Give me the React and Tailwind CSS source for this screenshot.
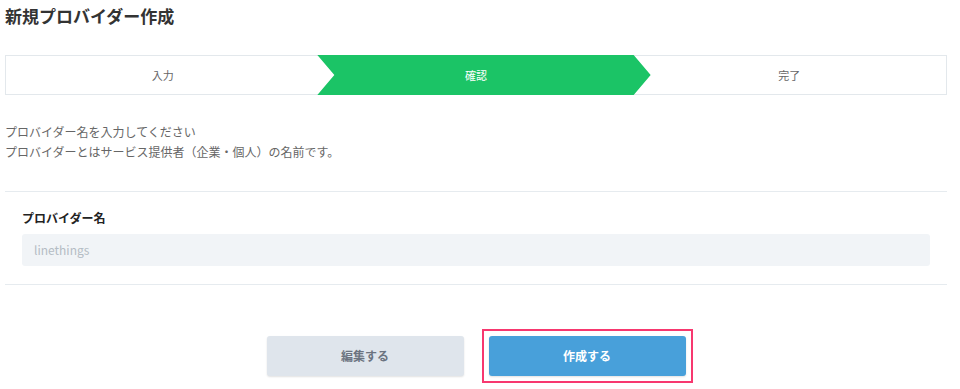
import React from 'react';

const steps = ['入力', '確認', '完了'];

function Stepper({ current }) {
    return (
        <div className="mt-[27px] flex h-[40px] border border-[#e3e8ec] bg-white">
            {steps.map((label, i) => (
                <div key={label} className="relative flex flex-1 items-center justify-center">
                    {i === current && (
                        <div className="absolute -top-px -bottom-px left-[-2px] right-[-18px] bg-[#1bc466] [clip-path:polygon(0_0,calc(100%-17px)_0,100%_50%,calc(100%-17px)_100%,0_100%,17px_50%)]" />
                    )}
                    <span className={`relative text-[11px] leading-none ${i === current ? 'text-white' : 'text-[#666]'}`}>
                        {label}
                    </span>
                </div>
            ))}
        </div>
    );
}

export default function App() {
    return (
        <div className="w-[960px] h-[389px] bg-white pl-[5px] pr-[13px] font-['Noto_Sans_CJK_JP',sans-serif]">
            <h1 className="pt-[4px] text-[17px] font-bold leading-[24px] text-[#333]">新規プロバイダー作成</h1>

            <Stepper current={1} />

            {/* Description */}
            <div className="mt-[27px] text-[12px] leading-[20px] text-[#666]">
                <p>プロバイダー名を入力してください</p>
                <p>プロバイダーとはサービス提供者（企業・個人）の名前です。</p>
            </div>

            {/* Form */}
            <div className="mt-[29px] border-y border-[#e6ebef] px-[17px] pt-[17px] pb-[18px]">
                <label className="block text-[12px] font-bold leading-[18px] text-[#222]">プロバイダー名</label>
                <div className="mt-[7px] flex h-[32px] items-center rounded-[3px] bg-[#f1f4f7] px-[12px] text-[12px] text-[#b4bcc4]">
                    linethings
                </div>
            </div>

            {/* Actions */}
            <div className="mt-[51px] flex justify-center gap-[25px]">
                <button className="h-[40px] w-[197px] rounded-[3px] bg-[#dfe5ec] text-[12px] font-bold text-[#6b7380] shadow-[0_1px_2px_rgba(0,0,0,0.12)]">
                    編集する
                </button>
                <div className="relative">
                    <button className="h-[40px] w-[197px] rounded-[3px] bg-[#48a0da] text-[12px] font-bold text-white shadow-[0_1px_2px_rgba(0,0,0,0.12)]">
                        作成する
                    </button>
                    {/* highlight frame */}
                    <div className="pointer-events-none absolute -inset-[7px] border-2 border-[#f7386f]" />
                </div>
            </div>
        </div>
    );
}
